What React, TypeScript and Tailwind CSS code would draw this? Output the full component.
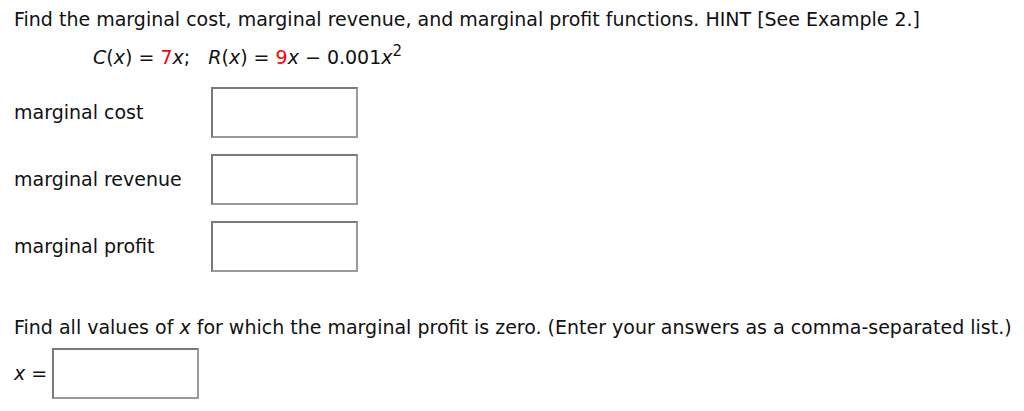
import React from "react";

const Box = ({ w = "w-[147px]" }: { w?: string }) => (
  <div className={`${w} h-[51px] border-2 border-t-[#7a7a7a] border-l-[#7a7a7a] border-r-[#9a9a9a] border-b-[#9a9a9a] bg-white`} />
);

export default function App() {
  return (
    <div
      className="w-[1024px] h-[411px] bg-white text-[#111] text-[19px] leading-none overflow-hidden"
      style={{ fontFamily: '"DejaVu Sans", Verdana, sans-serif' }}
    >
      <div className="pl-[14px] pt-[9px] h-[20px] flex items-center box-content whitespace-nowrap">
        Find the marginal cost, marginal revenue, and marginal profit functions. HINT [See Example 2.]
      </div>
      <div className="pl-[93px] mt-[18px] h-[20px] flex items-center whitespace-pre">
        <span className="italic">C</span>(<span className="italic">x</span>) = <span className="text-[#ff0000]">7</span>
        <span className="italic">x</span>;{"   "}
        <span className="italic">R</span>(<span className="italic">x</span>) = <span className="text-[#ff0000]">9</span>
        <span className="italic">x</span> − 0.001<span className="italic">x</span>
        <span className="text-[15px] relative -top-[6px]">2</span>
      </div>
      <div className="flex flex-col gap-[16px] mt-[20px] pl-[14px]">
        {["marginal cost", "marginal revenue", "marginal profit"].map((l) => (
          <div key={l} className="flex items-center">
            <div className="w-[197px] whitespace-nowrap">{l}</div>
            <Box />
          </div>
        ))}
      </div>
      <div className="pl-[14px] mt-[45px] h-[20px] flex items-center whitespace-nowrap">
        Find all values of&nbsp;<span className="italic">x</span>&nbsp;for which the marginal profit is zero. (Enter your answers as a comma-separated list.)
      </div>
      <div className="pl-[14px] mt-[11px] flex items-center">
        <div className="w-[38px] whitespace-nowrap">
          <span className="italic">x</span> =
        </div>
        <Box />
      </div>
    </div>
  );
}
